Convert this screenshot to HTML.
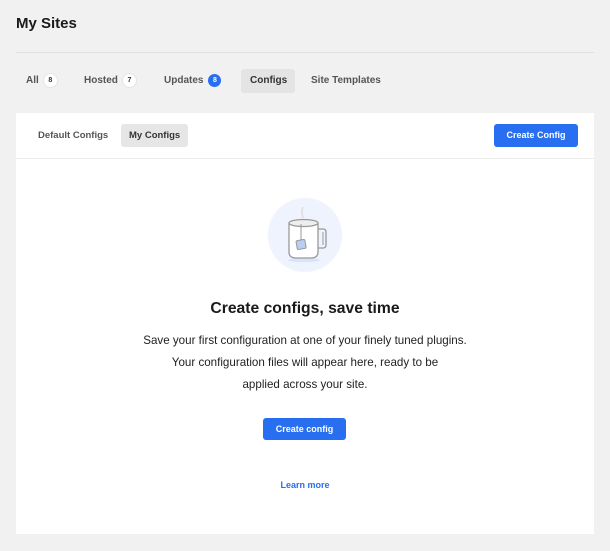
<!DOCTYPE html>
<html><head><style>
*{box-sizing:border-box;margin:0;padding:0}
body{width:610px;height:551px;background:#f1f1f1;font-family:"Liberation Sans",sans-serif;color:#333;position:relative;overflow:hidden}
.abs{position:absolute}
h1{position:absolute;left:16px;top:15px;font-size:15px;font-weight:bold;color:#1a1a1a}
.hr{position:absolute;left:16px;right:16px;top:52px;height:1px;background:#e0e0e0}
.tab{position:absolute;top:69px;height:24px;line-height:24px;font-size:10px;font-weight:bold;color:#555;padding:0 9px;border-radius:3px}
.badge{display:inline-block;width:13px;height:13px;line-height:13px;border-radius:50%;background:#fff;color:#333;font-size:7px;text-align:center;margin-left:5px;vertical-align:1px;box-shadow:0 0 0 1px #e4e4e4}
.card{position:absolute;left:16px;top:113px;width:578px;height:421px;background:#fff}
.sub{position:absolute;top:11px;height:23px;line-height:23px;font-size:9.5px;font-weight:bold;color:#555;padding:0 8px;border-radius:3px}
.btn{position:absolute;background:#286ef1;color:#fff;font-size:9px;font-weight:bold;text-align:center;border-radius:3px}
.c{position:absolute;left:0;width:578px;text-align:center}
</style></head><body>
<h1>My Sites</h1>
<div class="hr"></div>
<div class="tab" style="left:17px">All<span class="badge">8</span></div>
<div class="tab" style="left:75px">Hosted<span class="badge">7</span></div>
<div class="tab" style="left:155px">Updates<span class="badge" style="background:#286ef1;color:#fff;box-shadow:none">8</span></div>
<div class="tab" style="left:241px;background:#e4e4e4;color:#333;width:54px">Configs</div>
<div class="tab" style="left:302px">Site Templates</div>
<div class="card">
<div class="sub" style="left:14px">Default Configs</div>
<div class="sub" style="left:105px;background:#e6e6e6;color:#333">My Configs</div>
<div class="btn" style="left:478px;top:11px;width:84px;height:23px;line-height:23px">Create Config</div>
<div class="abs" style="left:0;right:0;top:45px;height:1px;background:#ececec"></div>
<svg class="abs" style="left:251px;top:84px" width="76" height="76" viewBox="0 0 76 76">
<circle cx="38" cy="38" r="37" fill="#eef3fe" stroke="#f4f6fb" stroke-dasharray="2 2"/>
<ellipse cx="37" cy="63" rx="16" ry="2" fill="#d6e3fb"/>
<path d="M22 26 L22 55 Q22 61 29 61 L44 61 Q51 61 51 55 L51 26" fill="#fff" stroke="#999" stroke-width="1.3"/>
<ellipse cx="36.5" cy="26" rx="14.5" ry="3.5" fill="#eee" stroke="#999" stroke-width="1.3"/>
<path d="M51 32 h5 q3 0 3 3 v13 q0 3 -3 3 h-5" fill="none" stroke="#999" stroke-width="1.3"/>
<path d="M56 35 v13" fill="none" stroke="#999" stroke-width="1"/>
<path d="M36 10 q-2 5 0 11" fill="none" stroke="#ddd" stroke-width="1.5"/>
<line x1="34" y1="27" x2="34" y2="43" stroke="#999"/>
<rect x="29.5" y="43" width="9" height="9" rx="1.5" fill="#b9cdf5" stroke="#999" transform="rotate(-10 34 47)"/>
</svg>
<div class="c" style="top:187px;font-size:15.7px;font-weight:bold;color:#1a1a1a">Create configs, save time</div>
<div class="c" style="top:217px;font-size:11.6px;line-height:22px;color:#222">Save your first configuration at one of your finely tuned plugins.<br>Your configuration files will appear here, ready to be<br>applied across your site.</div>
<div class="btn" style="left:247px;top:305px;width:83px;height:22px;line-height:22px">Create config</div>
<div class="c" style="top:367px;font-size:9px;font-weight:bold;color:#286ef1">Learn more</div>
</div>
</body></html>
